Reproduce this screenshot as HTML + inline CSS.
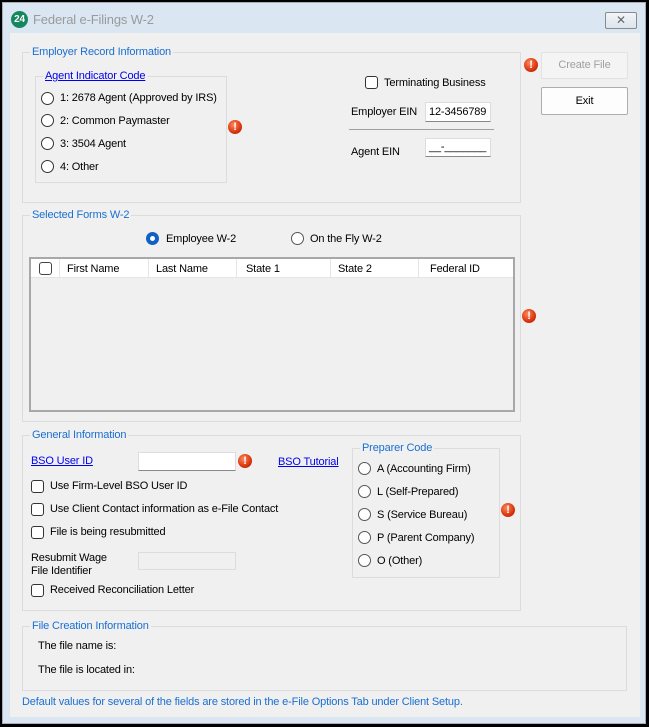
<!DOCTYPE html>
<html><head><meta charset="utf-8"><style>
*{box-sizing:border-box;margin:0;padding:0}
body{width:649px;height:727px;background:#000;position:relative;overflow:hidden;font-family:"Liberation Sans",sans-serif;font-size:11px;letter-spacing:-0.15px;color:#000}
.a{position:absolute;white-space:nowrap}
#frame{position:absolute;left:2px;top:2px;width:644px;height:722px;background:#dbe6f3;border:1px solid #aab}
#client{position:absolute;left:10px;top:33px;width:630px;height:684px;background:#f0f0f0}
.g{position:absolute;border:1px solid #dcdcdc}
.lg{position:absolute;background:#f0f0f0;color:#1a6fd1;padding:0 2px;top:-8px;line-height:14px;white-space:nowrap}
.rb{position:absolute;width:13px;height:13px;border:1px solid #333;border-radius:50%;background:#fff}
.cb{position:absolute;width:13px;height:13px;border:1px solid #333;border-radius:3px;background:#fff}
.err{position:absolute;width:14px;height:14px;border-radius:50%;background:radial-gradient(circle at 40% 35%,#ff8a5c,#d8330e 60%,#a81e00);color:#fff;font-weight:bold;font-size:11px;line-height:14px;text-align:center}
.tb{position:absolute;background:#fff;border:1px solid #ddd;border-bottom:1px solid #888;white-space:nowrap;overflow:hidden}
.lnk{color:#0000ee;text-decoration:underline}
</style></head><body>
<div id="frame"></div>
<div class="a" style="left:11px;top:11px;width:17px;height:17px;border-radius:50%;background:#14875f;color:#fff;font-weight:bold;font-size:10px;line-height:17px;text-align:center">24</div>
<div class="a" style="left:33px;top:12px;font-size:13px;color:#9a9a9a">Federal e-Filings W-2</div>
<div class="a" style="left:605px;top:12px;width:32px;height:17px;border:1px solid #8a8a8a;border-radius:2px;background:linear-gradient(#f2f5f9,#dde4ec);text-align:center;font-size:12px;line-height:15px;color:#666">✕</div>
<div id="client"></div>

<div class="g" style="left:22px;top:52px;width:499px;height:151px"><span class="lg" style="left:7px">Employer Record Information</span></div>
<div class="g" style="left:35px;top:76px;width:192px;height:107px"><span class="lg lnk" style="left:7px;color:#0000ee">Agent Indicator Code</span></div>
<div class="rb" style="left:41px;top:92px"></div><div class="a" style="left:60px;top:92px">1: 2678 Agent (Approved by IRS)</div>
<div class="rb" style="left:41px;top:114px"></div><div class="a" style="left:60px;top:115px">2: Common Paymaster</div>
<div class="rb" style="left:41px;top:137px"></div><div class="a" style="left:60px;top:138px">3: 3504 Agent</div>
<div class="rb" style="left:41px;top:160px"></div><div class="a" style="left:60px;top:161px">4: Other</div>
<div class="err" style="left:228px;top:120px">!</div>
<div class="cb" style="left:365px;top:76px"></div><div class="a" style="left:384px;top:77px">Terminating Business</div>
<div class="a" style="left:351px;top:106px">Employer EIN</div>
<div class="tb" style="left:425px;top:102px;width:66px;height:20px;padding:3px 0 0 3px">12-3456789</div>
<div class="a" style="left:349px;top:129px;width:145px;height:1px;background:#a0a0a0"></div>
<div class="a" style="left:351px;top:146px">Agent EIN</div>
<div class="tb" style="left:425px;top:138px;width:66px;height:19px;padding:2px 0 0 3px">__-_______</div>
<div class="err" style="left:524px;top:58px">!</div>
<div class="a" style="left:541px;top:52px;width:87px;height:27px;border:1px solid #e2e2e2;border-radius:2px;background:#f4f4f4;color:#a0a0a0;text-align:center;line-height:25px">Create File</div>
<div class="a" style="left:541px;top:87px;width:87px;height:28px;border:1px solid #adadad;border-radius:2px;background:#fdfdfd;text-align:center;line-height:26px">Exit</div>

<div class="g" style="left:22px;top:215px;width:499px;height:207px"><span class="lg" style="left:7px">Selected Forms W-2</span></div>
<div class="rb" style="left:146px;top:232px;border:4px solid #0f62c4"></div><div class="a" style="left:166px;top:233px">Employee W-2</div>
<div class="rb" style="left:291px;top:232px;border-color:#555"></div><div class="a" style="left:310px;top:233px">On the Fly W-2</div>
<div class="a" style="left:29px;top:257px;width:486px;height:155px;border:2px solid #a8a8a8;background:#f0f0f0"></div>
<div class="a" style="left:31px;top:259px;width:482px;height:19px;background:#fff;border-bottom:1px solid #e5e5e5"></div>
<div class="cb" style="left:39px;top:262px;border-color:#444"></div>
<div class="a" style="left:59px;top:259px;width:1px;height:19px;background:#e5e5e5"></div>
<div class="a" style="left:148px;top:259px;width:1px;height:19px;background:#e5e5e5"></div>
<div class="a" style="left:236px;top:259px;width:1px;height:19px;background:#e5e5e5"></div>
<div class="a" style="left:330px;top:259px;width:1px;height:19px;background:#e5e5e5"></div>
<div class="a" style="left:418px;top:259px;width:1px;height:19px;background:#e5e5e5"></div>
<div class="a" style="left:67px;top:263px">First Name</div>
<div class="a" style="left:156px;top:263px">Last Name</div>
<div class="a" style="left:246px;top:263px">State 1</div>
<div class="a" style="left:338px;top:263px">State 2</div>
<div class="a" style="left:430px;top:263px">Federal ID</div>
<div class="err" style="left:522px;top:309px">!</div>

<div class="g" style="left:22px;top:435px;width:499px;height:176px"><span class="lg" style="left:7px">General Information</span></div>
<div class="a lnk" style="left:31px;top:455px">BSO User ID</div>
<div class="tb" style="left:138px;top:452px;width:98px;height:19px"></div>
<div class="err" style="left:238px;top:454px">!</div>
<div class="a lnk" style="left:278px;top:456px">BSO Tutorial</div>
<div class="cb" style="left:31px;top:480px"></div><div class="a" style="left:50px;top:480px">Use Firm-Level BSO User ID</div>
<div class="cb" style="left:31px;top:503px"></div><div class="a" style="left:50px;top:503px">Use Client Contact information as e-File Contact</div>
<div class="cb" style="left:31px;top:526px"></div><div class="a" style="left:50px;top:526px">File is being resubmitted</div>
<div class="a" style="left:31px;top:552px;line-height:13px">Resubmit Wage<br>File Identifier</div>
<div class="a" style="left:138px;top:552px;width:98px;height:18px;border:1px solid #dcdcdc"></div>
<div class="cb" style="left:31px;top:584px"></div><div class="a" style="left:50px;top:584px">Received Reconciliation Letter</div>

<div class="g" style="left:352px;top:448px;width:148px;height:130px"><span class="lg" style="left:7px">Preparer Code</span></div>
<div class="rb" style="left:358px;top:462px;border-color:#555"></div><div class="a" style="left:377px;top:463px">A (Accounting Firm)</div>
<div class="rb" style="left:358px;top:485px;border-color:#555"></div><div class="a" style="left:377px;top:486px">L (Self-Prepared)</div>
<div class="rb" style="left:358px;top:508px;border-color:#555"></div><div class="a" style="left:377px;top:509px">S (Service Bureau)</div>
<div class="rb" style="left:358px;top:531px;border-color:#555"></div><div class="a" style="left:377px;top:532px">P (Parent Company)</div>
<div class="rb" style="left:358px;top:554px;border-color:#555"></div><div class="a" style="left:377px;top:555px">O (Other)</div>
<div class="err" style="left:501px;top:503px">!</div>

<div class="g" style="left:22px;top:626px;width:605px;height:65px"><span class="lg" style="left:7px">File Creation Information</span></div>
<div class="a" style="left:38px;top:640px">The file name is:</div>
<div class="a" style="left:38px;top:664px">The file is located in:</div>
<div class="a" style="left:22px;top:696px;color:#1a6fd1">Default values for several of the fields are stored in the e-File Options Tab under Client Setup.</div>
</body></html>
